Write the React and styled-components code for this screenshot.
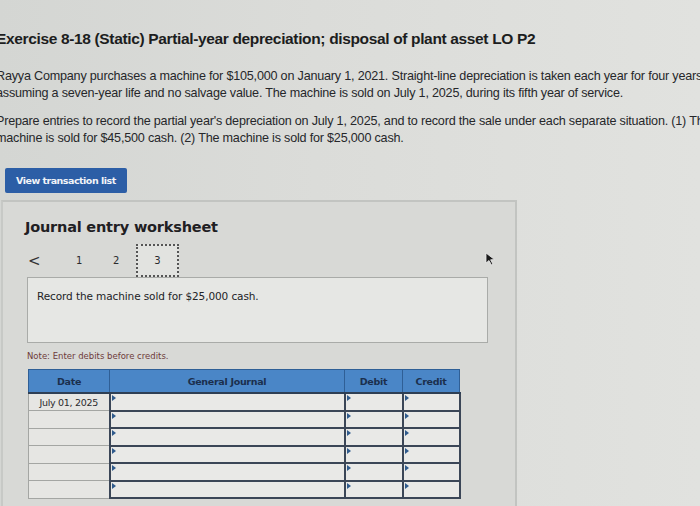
import styled, { createGlobalStyle } from "styled-components";

const GlobalStyle = createGlobalStyle`
  html, body {
    margin: 0;
    padding: 0;
  }
  body {
    width: 700px;
    height: 506px;
    overflow: hidden;
    background: linear-gradient(to right, #d4d6d3 0%, #dbdcd9 45%, #e1e2df 100%);
    font-family: "Liberation Sans", Arial, sans-serif;
    color: #1e1f22;
  }
`;

const Page = styled.div`
  margin-left: -4px;
  padding-top: 30px;
`;

const Title = styled.h1`
  margin: 0;
  font-size: 15.5px;
  font-weight: bold;
  letter-spacing: -0.35px;
  color: #1c1d20;
`;

const Para = styled.p`
  margin: ${(p) => p.$top || 0}px 0 0;
  font-size: 12.6px;
  line-height: 16.5px;
  letter-spacing: -0.2px;
  white-space: nowrap;
  color: #26272a;
`;

const Button = styled.button`
  display: block;
  margin: 22px 0 0 9px;
  width: 122px;
  height: 25px;
  border: none;
  border-radius: 2px;
  background: #2c5ea6;
  color: #f2f4f8;
  font-family: "DejaVu Sans", Verdana, sans-serif;
  font-weight: bold;
  font-size: 9.5px;
  letter-spacing: -0.5px;
  text-align: left;
  padding: 0 0 0 11px;
`;

const Panel = styled.section`
  margin: 7px 0 0 5px;
  width: 516px;
  height: 320px;
  box-sizing: border-box;
  border-top: 2px solid #c2c4c1;
  border-left: 2px solid #c7c9c6;
  border-right: 2px solid #c2c4c1;
  background: #d8d9d6;
  padding: 17px 0 0 22px;
  position: relative;
`;

const Heading = styled.h2`
  margin: 0;
  font-family: "DejaVu Sans", Verdana, sans-serif;
  font-size: 14.5px;
  font-weight: bold;
  letter-spacing: -0.2px;
  color: #1f2023;
`;

const Nav = styled.div`
  display: flex;
  align-items: center;
  margin-top: 9px;
  height: 33px;
  font-family: "DejaVu Sans", Verdana, sans-serif;
  font-size: 10px;
  color: #2a2b2e;
`;

const Arrow = styled.span`
  width: 36px;
  padding-left: 3px;
  font-size: 15px;
  color: #333;
`;

const Step = styled.span`
  width: ${(p) => (p.$active ? 43 : 37)}px;
  height: ${(p) => (p.$active ? "33px" : "auto")};
  box-sizing: border-box;
  display: flex;
  align-items: center;
  justify-content: ${(p) => (p.$active ? "center" : "flex-start")};
  padding-left: ${(p) => (p.$active ? 0 : 12)}px;
  border: ${(p) => (p.$active ? "2px dotted #555" : "none")};
  background: ${(p) => (p.$active ? "#e2e3e0" : "transparent")};
  margin-left: ${(p) => (p.$active ? -2 : 0)}px;
`;

const RecordBox = styled.div`
  margin: 0 0 0 2px;
  width: 461px;
  height: 66px;
  box-sizing: border-box;
  border: 1px solid #a9aba8;
  background: #e6e7e4;
  padding: 12px 0 0 9px;
  font-family: "DejaVu Sans", Verdana, sans-serif;
  font-size: 10.5px;
  letter-spacing: -0.1px;
  color: #222326;
`;

const Note = styled.div`
  margin: 8px 0 0 2px;
  font-family: "DejaVu Sans", Verdana, sans-serif;
  font-size: 8.5px;
  color: #6e3b3b;
`;

const Cursor = styled.svg`
  position: absolute;
  left: 482px;
  top: 50px;
`;

const Table = styled.table`
  margin: 8px 0 0 3px;
  border-collapse: collapse;
  font-family: "DejaVu Sans", Verdana, sans-serif;
  font-size: 9.5px;
  letter-spacing: -0.3px;
`;

const Th = styled.th`
  width: ${(p) => p.$w}px;
  height: 22px;
  padding: 0;
  background: #4a86c7;
  color: #1b2f4d;
  font-weight: bold;
  border: 1px solid #2f5f96;
  border-bottom: 2px solid #2e3f55;
`;

const DateCell = styled.td`
  height: 15.5px;
  padding: 0;
  background: #e6e6e3;
  border: 1px solid #a4a6a3;
  text-align: center;
  color: #2a2b2e;
`;

const InputCell = styled.td`
  height: 15.5px;
  padding: 0;
  background: #e9e9e7;
  border: 2px solid #3b4657;
  position: relative;

  &::before {
    content: "";
    position: absolute;
    left: 1px;
    top: 1px;
    border-top: 3px solid transparent;
    border-bottom: 3px solid transparent;
    border-left: 4px solid #2f5a8c;
  }
`;

const rows = ["July 01, 2025", "", "", "", "", ""];

export default function App() {
  return (
    <>
      <GlobalStyle />
      <Page>
        <Title>
          Exercise 8-18 (Static) Partial-year depreciation; disposal of plant
          asset LO P2
        </Title>
        <Para $top={20}>
          Rayya Company purchases a machine for $105,000 on January 1, 2021.
          Straight-line depreciation is taken each year for four years
          <br />
          assuming a seven-year life and no salvage value. The machine is sold
          on July 1, 2025, during its fifth year of service.
        </Para>
        <Para $top={12}>
          Prepare entries to record the partial year's depreciation on July 1,
          2025, and to record the sale under each separate situation. (1) The
          <br />
          machine is sold for $45,500 cash. (2) The machine is sold for $25,000
          cash.
        </Para>
        <Button>View transaction list</Button>
        <Panel>
          <Heading>Journal entry worksheet</Heading>
          <Nav>
            <Arrow>&lt;</Arrow>
            <Step>1</Step>
            <Step>2</Step>
            <Step $active>3</Step>
          </Nav>
          <RecordBox>Record the machine sold for $25,000 cash.</RecordBox>
          <Note>Note: Enter debits before credits.</Note>
          <Table>
            <thead>
              <tr>
                <Th $w={80}>Date</Th>
                <Th $w={234}>General Journal</Th>
                <Th $w={57}>Debit</Th>
                <Th $w={56}>Credit</Th>
              </tr>
            </thead>
            <tbody>
              {rows.map((d, i) => (
                <tr key={i}>
                  <DateCell>{d}</DateCell>
                  <InputCell />
                  <InputCell />
                  <InputCell />
                </tr>
              ))}
            </tbody>
          </Table>
          <Cursor width="12" height="14" viewBox="0 0 12 14">
            <path d="M1 1 L1 11 L4 8.5 L6.5 13 L8 12.3 L5.6 7.8 L9.5 7.6 Z" fill="#1a1a1a" stroke="#eee" strokeWidth="0.8" />
          </Cursor>
        </Panel>
      </Page>
    </>
  );
}
